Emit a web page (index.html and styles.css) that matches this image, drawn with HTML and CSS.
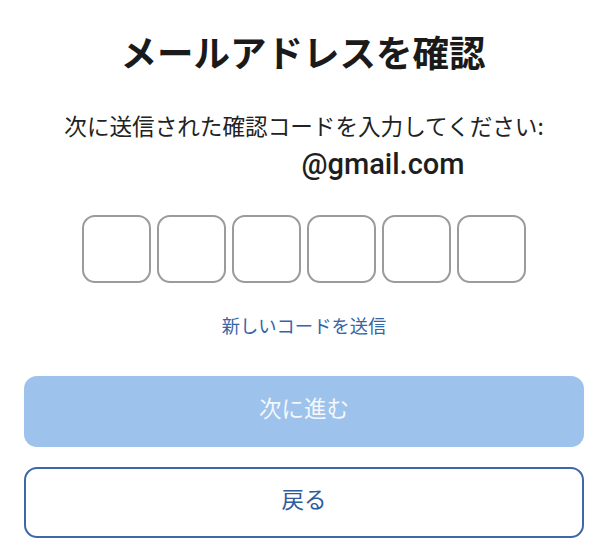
FILE: index.html
```html
<!DOCTYPE html>
<html lang="ja">
<head>
<meta charset="utf-8">
<title>メールアドレスを確認</title>
<link rel="stylesheet" href="styles.css">
</head>
<body>
<main class="page">
  <h1 class="title">メールアドレスを確認</h1>
  <p class="lead">次に送信された確認コードを入力してください:</p>
  <p class="email"><span class="redacted" aria-hidden="true"></span>@gmail.com</p>
  <div class="code">
    <input class="digit" type="text" maxlength="1" inputmode="numeric">
    <input class="digit" type="text" maxlength="1" inputmode="numeric">
    <input class="digit" type="text" maxlength="1" inputmode="numeric">
    <input class="digit" type="text" maxlength="1" inputmode="numeric">
    <input class="digit" type="text" maxlength="1" inputmode="numeric">
    <input class="digit" type="text" maxlength="1" inputmode="numeric">
  </div>
  <a class="resend" href="#">新しいコードを送信</a>
  <div class="actions">
    <button class="btn btn-primary" type="button" disabled>次に進む</button>
    <button class="btn btn-outline" type="button">戻る</button>
  </div>
</main>
</body>
</html>
```
FILE: styles.css
```css
html, body {
  margin: 0;
  padding: 0;
  background: #ffffff;
}

body {
  font-family: "Noto Sans CJK JP", "Noto Sans", sans-serif;
  color: #1c1c1c;
}

.page {
  width: 608px;
  box-sizing: border-box;
  padding: 34px 24px 0;
  display: flex;
  flex-direction: column;
  align-items: center;
}

.title {
  margin: 0 0 0 -2px;
  font-size: 36.5px;
  line-height: 36px;
  font-weight: 700;
  color: #1a1a1a;
  letter-spacing: 0;
}

.lead {
  margin: 45px 0 0;
  font-size: 22.6px;
  line-height: 22px;
  font-weight: 400;
  color: #222222;
  white-space: nowrap;
}

.email {
  margin: 13px 0 0;
  font-family: Roboto, "Noto Sans", sans-serif;
  font-size: 29px;
  line-height: 28px;
  font-weight: 500;
  color: #1e1e1e;
  display: flex;
  align-items: baseline;
}

.redacted {
  display: inline-block;
  width: 158px;
}

.code {
  margin-top: 37px;
  display: flex;
  gap: 6px;
}

.digit {
  width: 69px;
  height: 68px;
  box-sizing: border-box;
  border: 2px solid #9b9b9b;
  border-radius: 13px;
  background: #ffffff;
  padding: 0;
  margin: 0;
  font-size: 28px;
  text-align: center;
  outline: none;
}

.resend {
  margin-top: 33px;
  font-size: 18.3px;
  line-height: 18px;
  color: #3565a6;
  text-decoration: none;
}

.actions {
  margin-top: 42px;
  width: 100%;
  display: flex;
  flex-direction: column;
  gap: 20px;
}

.btn {
  width: 100%;
  height: 71px;
  box-sizing: border-box;
  border-radius: 13px;
  font-family: "Noto Sans CJK JP", "Noto Sans", sans-serif;
  font-size: 22.5px;
  line-height: 1;
  font-weight: 400;
  display: flex;
  align-items: center;
  justify-content: center;
  margin: 0;
  padding: 0 0 8px;
}

.btn-primary {
  background: #9dc2ec;
  border: none;
  color: #f4f8fd;
}

.btn-outline {
  background: #ffffff;
  border: 2px solid #3f66a8;
  color: #2f5b9e;
}
```
